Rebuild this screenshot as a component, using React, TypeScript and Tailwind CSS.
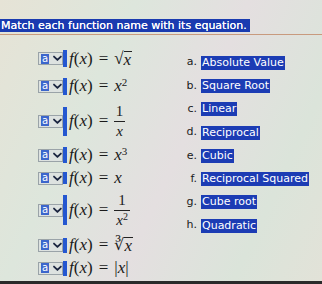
import React from 'react';

const mathFont = { fontFamily: '"Liberation Serif", "DejaVu Serif", serif' };

const Chevron: React.FC = () => (
  <svg width="9" height="7" viewBox="0 0 9 7" className="ml-[4px]">
    <path d="M1 1.5 L4.5 5 L8 1.5" fill="none" stroke="#1b2540" strokeWidth="1.8" strokeLinecap="round" strokeLinejoin="round" />
  </svg>
);

const Picker: React.FC = () => (
  <div className="flex items-center w-[25px] h-[13px] border border-[#9aa3a8] bg-[#dde2e0] pl-[2px]">
    <span className="bg-[#3c66cc] text-white text-[10px] leading-[10px] h-[10px] px-[1px]" style={{ fontFamily: '"DejaVu Sans", sans-serif' }}>
      a
    </span>
    <Chevron />
  </div>
);

const Fx: React.FC = () => (
  <span className="italic">
    f<span className="not-italic">(</span>x<span className="not-italic">)</span>
    <span className="not-italic mx-[6px]">=</span>
  </span>
);

const Frac: React.FC<{ den: React.ReactNode }> = ({ den }) => (
  <span className="inline-flex flex-col items-center align-middle text-[15px] leading-[15px]">
    <span className="px-[1px] pb-[2px]">1</span>
    <span className="border-t border-[#222] px-[2px] pt-[2px] italic">{den}</span>
  </span>
);

type Row = { h: number; bar: number; eq: React.ReactNode };

const rows: Row[] = [
  {
    h: 23,
    bar: 17,
    eq: (
      <span className="flex items-center">
        <span>√</span>
        <span className="border-t border-[#222] italic leading-[15px] pr-[1px]">x</span>
      </span>
    ),
  },
  {
    h: 32,
    bar: 17,
    eq: (
      <span className="italic">
        x<sup className="not-italic text-[11px]">2</sup>
      </span>
    ),
  },
  { h: 38, bar: 29, eq: <Frac den="x" /> },
  {
    h: 30,
    bar: 16,
    eq: (
      <span className="italic">
        x<sup className="not-italic text-[11px]">3</sup>
      </span>
    ),
  },
  { h: 16, bar: 12, eq: <span className="italic">x</span> },
  {
    h: 48,
    bar: 30,
    eq: (
      <Frac
        den={
          <>
            x<sup className="not-italic text-[10px]">2</sup>
          </>
        }
      />
    ),
  },
  {
    h: 22,
    bar: 15,
    eq: (
      <span className="flex items-center">
        <span style={{ fontFamily: '"DejaVu Serif", serif' }} className="text-[16px]">∛</span>
        <span className="border-t border-[#222] italic leading-[15px] pr-[1px]">x</span>
      </span>
    ),
  },
  {
    h: 24,
    bar: 15,
    eq: (
      <span>
        |<span className="italic">x</span>|
      </span>
    ),
  },
];

const labels: [string, string][] = [
  ['a.', 'Absolute Value'],
  ['b.', 'Square Root'],
  ['c.', 'Linear'],
  ['d.', 'Reciprocal'],
  ['e.', 'Cubic'],
  ['f.', 'Reciprocal Squared'],
  ['g.', 'Cube root'],
  ['h.', 'Quadratic'],
];

export default function App() {
  return (
    <div
      className="relative w-[322px] h-[284px] overflow-hidden bg-[#dfe3da] text-[#1a1a1a]"
      style={{ fontFamily: '"DejaVu Sans", sans-serif' }}
    >
      <div className="absolute inset-0 bg-[linear-gradient(115deg,#e6e3d6_0%,#dde6dc_30%,#e4dfe0_55%,#dbe4da_80%,#e2e2d8_100%)]" />
      <div className="relative">
        <div className="flex pt-[19px]">
          <span className="bg-[#1a3bb0] text-white text-[11px] leading-[13px] h-[13px] font-medium pl-[1px] pr-[3px] [text-shadow:0_0_0.4px_#fff]">
            Match each function name with its equation.
          </span>
        </div>
        <div className="mt-[2px] h-px bg-[#c89a7e]" />

        <div className="flex">
          <div className="pl-[38px] w-[186px] pt-[12px]">
            {rows.map((r, i) => (
              <div key={i} className="flex items-center" style={{ height: r.h }}>
                <Picker />
                <div className="w-[4px] bg-[#2457d0]" style={{ height: r.bar }} />
                <div className="flex items-center pl-[2px] text-[17px] leading-[18px]" style={mathFont}>
                  <Fx />
                  {r.eq}
                </div>
              </div>
            ))}
          </div>
          <div className="pt-[16px]">
            {labels.map(([l, t]) => (
              <div key={l} className="flex items-center h-[23.3px]">
                <span className="w-[11px] text-right text-[11px]">{l}</span>
                <span className="ml-[4px] bg-[#1c3cb4] text-white text-[11px] leading-[14px] h-[14px] px-[1px]">
                  {t}
                </span>
              </div>
            ))}
          </div>
        </div>
      </div>
      <div className="absolute left-0 right-0 bottom-0 h-[3px] bg-[#2a2a2a]" />
    </div>
  );
}
